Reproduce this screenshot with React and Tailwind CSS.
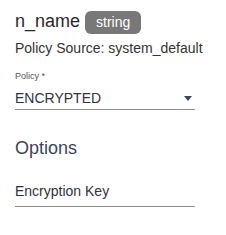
import React from "react";

export default function App() {
  return (
    <div
      className="w-[226px] h-[235px] bg-white pl-[15px] flex flex-col"
      style={{ fontFamily: '"Liberation Sans", Arial, sans-serif' }}
    >
      <div className="pt-[9px] flex items-start gap-[5px]">
        <span className="text-[18px] leading-[24px] text-[#2a2a2a]">n_name</span>
        <span className="mt-[2px] h-[23px] px-[11px] rounded-[6px] bg-[#787878] text-white text-[14px] leading-[23px]">
          string
        </span>
      </div>
      <div className="mt-[4px] text-[14px] leading-[20px] text-[#333333]">
        Policy Source: system_default
      </div>
      <div className="mt-[12px] text-[9px] leading-[12px] text-[#555555]">Policy *</div>
      <div className="mt-[6px] w-[180px] flex items-center justify-between pb-[1px] border-b border-[#8f8f8f]">
        <span className="text-[14px] leading-[20px] text-[#2e3440]">ENCRYPTED</span>
        <svg width="8" height="5" viewBox="0 0 8 5" className="mr-[3px] mt-[1px]">
          <path d="M0 0 L8 0 L4 5 Z" fill="#3e4652" />
        </svg>
      </div>
      <div className="mt-[26px] text-[18px] leading-[24px] text-[#3a4556]">Options</div>
      <div className="mt-[21px] w-[180px] pb-[5px] border-b border-[#8f8f8f] text-[14px] leading-[20px] text-[#2e3440]">
        Encryption Key
      </div>
    </div>
  );
}
